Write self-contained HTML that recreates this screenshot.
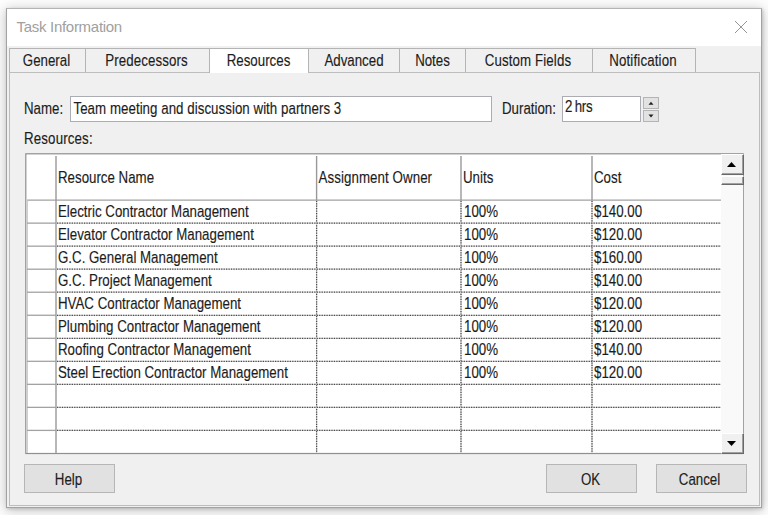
<!DOCTYPE html>
<html><head><meta charset="utf-8"><title>Task Information</title>
<style>
*{box-sizing:border-box;margin:0;padding:0}
html,body{width:768px;height:515px;overflow:hidden;background:#fefefe}
body{position:relative;font-family:"Liberation Sans",sans-serif;font-size:13.3px;color:#1c1c1c;line-height:16px}
.abs{position:absolute}
#win{left:6px;top:8px;width:756px;height:500px;background:#f0f0f0;border:1px solid #a2a2a2;border-top-color:#b4b4b4;box-shadow:1px 1px 3px rgba(0,0,0,.16),0 2px 12px 1px rgba(0,0,0,.22)}
#tbar{left:7px;top:9px;width:754px;height:37px;background:#fff}
#title{left:16.5px;top:19px;font-size:15px;color:#a0a0a0;letter-spacing:-.29px;white-space:nowrap}
.t{display:inline-block;white-space:nowrap;transform:scaleY(1.18);transform-origin:50% 50%;-webkit-text-stroke:0.12px #1c1c1c}
.tab{top:48px;height:24px;border:1px solid #b4b4b4;border-bottom:none;border-left:none;background:#f0f0f0;text-align:center;line-height:24px;white-space:nowrap}
.tab.first{border-left:1px solid #b4b4b4}
.tab.sel{background:#fff;height:25px;border-left:1px solid #b4b4b4}
#pane{left:9px;top:72px;width:751px;height:434px;border:1px solid #bdbdbd;background:#f0f0f0}
.inp{background:#fff;border:1px solid #abadb3;height:26px;white-space:nowrap;overflow:hidden}
.btn{background:#e1e1e1;border:1px solid #b6b6b6;text-align:center;height:29px;line-height:29px}
.sp{background:#e2e2e2;border:1px solid #b4b4b4;width:16px;height:12px;left:643px}
#grid{left:26px;top:154px;width:717px;height:299px;background:#fff}
.hl{height:1px;left:56px;width:665px;background-image:repeating-linear-gradient(90deg,#333 0 1.2px,transparent 1.2px 2.45px)}
.rl{height:1px;left:26px;width:30px;background:#a8a8a8}
.vl{width:1px;top:200px;height:253px;background-image:repeating-linear-gradient(180deg,#333 0 1.2px,transparent 1.2px 2.45px)}
.vh{width:1px;top:156px;height:44px;background:#9a9a9a}
.sb{background:#f0f0f0;border:1px solid;border-color:#fff #696969 #696969 #fff;box-shadow:inset -1px -1px 0 #a0a0a0}
</style></head><body>
<div id="win" class="abs"></div><div id="tbar" class="abs"></div><div id="title" class="abs">Task Information</div>
<svg class="abs" style="left:734px;top:20px" width="14" height="14" viewBox="0 0 14 14"><path d="M1 1 L13 13 M13 1 L1 13" stroke="#959595" stroke-width="1" fill="none"/></svg>
<div id="pane" class="abs"></div>
<div class="abs tab first" style="left:9px;width:77px"><span class="t" style="position:relative;left:-1px;letter-spacing:0px">General</span></div>
<div class="abs tab " style="left:86px;width:124px"><span class="t" style="position:relative;left:-1px;letter-spacing:0.1px">Predecessors</span></div>
<div class="abs tab sel" style="left:209px;width:100px"><span class="t" style="position:relative;left:-0.5px;letter-spacing:0px">Resources</span></div>
<div class="abs tab " style="left:309px;width:91px"><span class="t" style="position:relative;left:0px;letter-spacing:0px">Advanced</span></div>
<div class="abs tab " style="left:400px;width:66px"><span class="t" style="position:relative;left:0px;letter-spacing:0px">Notes</span></div>
<div class="abs tab " style="left:466px;width:127px"><span class="t" style="position:relative;left:-1px;letter-spacing:0.1px">Custom Fields</span></div>
<div class="abs tab " style="left:593px;width:103px"><span class="t" style="position:relative;left:-1px;letter-spacing:0.15px">Notification</span></div>
<div class="abs t" style="left:24px;top:101px;">Name:</div>
<div class="abs inp" style="left:70px;top:96px;width:422px"></div>
<div class="abs t" style="left:73.5px;top:101px;letter-spacing:.04px">Team meeting and discussion with partners 3</div>
<div class="abs t" style="left:502px;top:101px;">Duration:</div>
<div class="abs inp" style="left:562px;top:96px;width:79px"></div>
<div class="abs t" style="left:565px;top:99px;letter-spacing:-.3px;word-spacing:-.8px">2 hrs</div>
<div class="abs sp" style="top:97px"></div><div class="abs sp" style="top:110px"></div>
<svg class="abs" style="left:648px;top:101px" width="6" height="4"><path d="M0.5 3.7 L3 0.8 L5.5 3.7Z" fill="#222"/></svg>
<svg class="abs" style="left:648px;top:114px" width="6" height="4"><path d="M0.5 0.5 L3 3.4 L5.5 0.5Z" fill="#222"/></svg>
<div class="abs t" style="left:24px;top:131px;letter-spacing:.15px">Resources:</div>
<div id="grid" class="abs"></div>
<svg class="abs" style="left:0;top:0" width="768" height="515" viewBox="0 0 768 515"><rect x="25.8" y="153.8" width="717.4" height="299.7" fill="none" stroke="#8f8f8f" stroke-width="1.2"/><line x1="27" x2="721.3" y1="200.1" y2="200.1" stroke="#a2a2a2" stroke-width="1.3"/><line x1="56.0" x2="56.0" y1="156" y2="453" stroke="#999" stroke-width="1.4"/><line x1="27.3" x2="27.3" y1="200" y2="453" stroke="#c4c4c4" stroke-width="1"/><line x1="316.6" x2="316.6" y1="156" y2="200" stroke="#999" stroke-width="1.4"/><line x1="316.6" x2="316.6" y1="200.7" y2="453" stroke="#d4d4d4" stroke-width="1.25"/><line x1="316.6" x2="316.6" y1="200.7" y2="453" stroke="#4a4a4a" stroke-width="1.25" stroke-dasharray="1.225 1.225"/><line x1="461.0" x2="461.0" y1="156" y2="200" stroke="#999" stroke-width="1.4"/><line x1="461.0" x2="461.0" y1="200.7" y2="453" stroke="#d4d4d4" stroke-width="1.25"/><line x1="461.0" x2="461.0" y1="200.7" y2="453" stroke="#4a4a4a" stroke-width="1.25" stroke-dasharray="1.225 1.225"/><line x1="592.0" x2="592.0" y1="156" y2="200" stroke="#999" stroke-width="1.4"/><line x1="592.0" x2="592.0" y1="200.7" y2="453" stroke="#d4d4d4" stroke-width="1.25"/><line x1="592.0" x2="592.0" y1="200.7" y2="453" stroke="#4a4a4a" stroke-width="1.25" stroke-dasharray="1.225 1.225"/><line x1="27" x2="56" y1="223.13" y2="223.13" stroke="#a2a2a2" stroke-width="1.3"/><line x1="57" x2="721" y1="223.13" y2="223.13" stroke="#d4d4d4" stroke-width="1.25"/><line x1="57" x2="721" y1="223.13" y2="223.13" stroke="#4a4a4a" stroke-width="1.25" stroke-dasharray="1.225 1.225"/><line x1="27" x2="56" y1="246.16" y2="246.16" stroke="#a2a2a2" stroke-width="1.3"/><line x1="57" x2="721" y1="246.16" y2="246.16" stroke="#d4d4d4" stroke-width="1.25"/><line x1="57" x2="721" y1="246.16" y2="246.16" stroke="#4a4a4a" stroke-width="1.25" stroke-dasharray="1.225 1.225"/><line x1="27" x2="56" y1="269.19" y2="269.19" stroke="#a2a2a2" stroke-width="1.3"/><line x1="57" x2="721" y1="269.19" y2="269.19" stroke="#d4d4d4" stroke-width="1.25"/><line x1="57" x2="721" y1="269.19" y2="269.19" stroke="#4a4a4a" stroke-width="1.25" stroke-dasharray="1.225 1.225"/><line x1="27" x2="56" y1="292.22" y2="292.22" stroke="#a2a2a2" stroke-width="1.3"/><line x1="57" x2="721" y1="292.22" y2="292.22" stroke="#d4d4d4" stroke-width="1.25"/><line x1="57" x2="721" y1="292.22" y2="292.22" stroke="#4a4a4a" stroke-width="1.25" stroke-dasharray="1.225 1.225"/><line x1="27" x2="56" y1="315.25" y2="315.25" stroke="#a2a2a2" stroke-width="1.3"/><line x1="57" x2="721" y1="315.25" y2="315.25" stroke="#d4d4d4" stroke-width="1.25"/><line x1="57" x2="721" y1="315.25" y2="315.25" stroke="#4a4a4a" stroke-width="1.25" stroke-dasharray="1.225 1.225"/><line x1="27" x2="56" y1="338.28" y2="338.28" stroke="#a2a2a2" stroke-width="1.3"/><line x1="57" x2="721" y1="338.28" y2="338.28" stroke="#d4d4d4" stroke-width="1.25"/><line x1="57" x2="721" y1="338.28" y2="338.28" stroke="#4a4a4a" stroke-width="1.25" stroke-dasharray="1.225 1.225"/><line x1="27" x2="56" y1="361.31" y2="361.31" stroke="#a2a2a2" stroke-width="1.3"/><line x1="57" x2="721" y1="361.31" y2="361.31" stroke="#d4d4d4" stroke-width="1.25"/><line x1="57" x2="721" y1="361.31" y2="361.31" stroke="#4a4a4a" stroke-width="1.25" stroke-dasharray="1.225 1.225"/><line x1="27" x2="56" y1="384.34" y2="384.34" stroke="#a2a2a2" stroke-width="1.3"/><line x1="57" x2="721" y1="384.34" y2="384.34" stroke="#d4d4d4" stroke-width="1.25"/><line x1="57" x2="721" y1="384.34" y2="384.34" stroke="#4a4a4a" stroke-width="1.25" stroke-dasharray="1.225 1.225"/><line x1="27" x2="56" y1="407.37" y2="407.37" stroke="#a2a2a2" stroke-width="1.3"/><line x1="57" x2="721" y1="407.37" y2="407.37" stroke="#d4d4d4" stroke-width="1.25"/><line x1="57" x2="721" y1="407.37" y2="407.37" stroke="#4a4a4a" stroke-width="1.25" stroke-dasharray="1.225 1.225"/><line x1="27" x2="56" y1="430.4" y2="430.4" stroke="#a2a2a2" stroke-width="1.3"/><line x1="57" x2="721" y1="430.4" y2="430.4" stroke="#d4d4d4" stroke-width="1.25"/><line x1="57" x2="721" y1="430.4" y2="430.4" stroke="#4a4a4a" stroke-width="1.25" stroke-dasharray="1.225 1.225"/></svg>
<div class="abs t" style="left:58px;top:170px;">Resource Name</div>
<div class="abs t" style="left:318.5px;top:170px;letter-spacing:.08px">Assignment Owner</div>
<div class="abs t" style="left:463px;top:170px;">Units</div>
<div class="abs t" style="left:594px;top:170px;">Cost</div>
<div class="abs t" style="left:58px;top:204px;">Electric Contractor Management</div><div class="abs t" style="left:464px;top:204px;">100%</div><div class="abs t" style="left:594px;top:204px;">$140.00</div>
<div class="abs t" style="left:58px;top:227px;">Elevator Contractor Management</div><div class="abs t" style="left:464px;top:227px;">100%</div><div class="abs t" style="left:594px;top:227px;">$120.00</div>
<div class="abs t" style="left:58px;top:250px;">G.C. General Management</div><div class="abs t" style="left:464px;top:250px;">100%</div><div class="abs t" style="left:594px;top:250px;">$160.00</div>
<div class="abs t" style="left:58px;top:273px;">G.C. Project Management</div><div class="abs t" style="left:464px;top:273px;">100%</div><div class="abs t" style="left:594px;top:273px;">$140.00</div>
<div class="abs t" style="left:58px;top:296px;">HVAC Contractor Management</div><div class="abs t" style="left:464px;top:296px;">100%</div><div class="abs t" style="left:594px;top:296px;">$120.00</div>
<div class="abs t" style="left:58px;top:319px;">Plumbing Contractor Management</div><div class="abs t" style="left:464px;top:319px;">100%</div><div class="abs t" style="left:594px;top:319px;">$120.00</div>
<div class="abs t" style="left:58px;top:342px;">Roofing Contractor Management</div><div class="abs t" style="left:464px;top:342px;">100%</div><div class="abs t" style="left:594px;top:342px;">$140.00</div>
<div class="abs t" style="left:58px;top:365px;">Steel Erection Contractor Management</div><div class="abs t" style="left:464px;top:365px;">100%</div><div class="abs t" style="left:594px;top:365px;">$120.00</div>
<div class="abs" style="left:721px;top:154px;width:21.6px;height:299px;background:#f9f9f9"></div>
<div class="abs sb" style="left:721px;top:153.5px;width:22.5px;height:21.5px"></div>
<div class="abs sb" style="left:721px;top:175.5px;width:22.5px;height:9.5px"></div>
<div class="abs sb" style="left:721px;top:432.5px;width:22.5px;height:21px"></div>
<svg class="abs" style="left:727px;top:162px" width="9" height="5"><path d="M0 5 L4.5 0 L9 5Z" fill="#000"/></svg>
<svg class="abs" style="left:727px;top:441px" width="9" height="5"><path d="M0 0 L4.5 5 L9 0Z" fill="#000"/></svg>
<div class="abs btn" style="left:24px;top:464px;width:91px"><span class="t" style="position:relative;left:-1px">Help</span></div>
<div class="abs btn" style="left:546px;top:464px;width:91px"><span class="t" style="position:relative;left:-1px">OK</span></div>
<div class="abs btn" style="left:656px;top:464px;width:91px"><span class="t" style="position:relative;left:-2px">Cancel</span></div>
</body></html>
